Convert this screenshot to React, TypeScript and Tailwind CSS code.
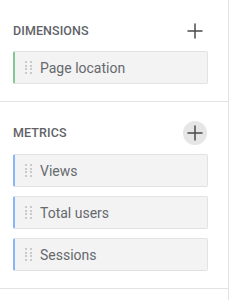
import { Plus } from 'lucide-react';

interface FieldChip {
  label: string;
}

const DIMENSIONS: FieldChip[] = [{ label: 'Page location' }];
const METRICS: FieldChip[] = [{ label: 'Views' }, { label: 'Total users' }, { label: 'Sessions' }];

/** 拖拽点 */
function DragHandle() {
  return (
    <div className="grid grid-cols-2 gap-x-[3px] gap-y-[1.5px] w-[7px]">
      {Array.from({ length: 8 }).map((_, i) => (
        <span key={i} className="block w-[2px] h-[2px] rounded-full bg-[#bdbdbd]" />
      ))}
    </div>
  );
}

function Chip({ label, accent }: { label: string; accent: string }) {
  return (
    <div
      className={`flex items-center h-[33px] bg-[#f3f3f3] border border-[#e2e2e2] border-l-2 ${accent} rounded-[2px]`}
    >
      <div className="pl-[10px] pr-[8px]">
        <DragHandle />
      </div>
      <span className="text-[14px] text-[#66696d] leading-none">{label}</span>
    </div>
  );
}

function SectionHeader({ title, circled }: { title: string; circled?: boolean }) {
  return (
    <div className="flex items-center justify-between h-[24px] pl-[13px] pr-[21px]">
      <span className="text-[12.5px] font-medium text-[#5f6368] tracking-[0.1px]">{title}</span>
      <div
        className={`w-[24px] h-[24px] flex items-center justify-center rounded-full ${circled ? 'bg-[#e6e6e6]' : ''}`}
      >
        <Plus size={24} strokeWidth={1.5} className="text-[#4a4a4a]" />
      </div>
    </div>
  );
}

export default function App() {
  return (
    <div
      className="relative w-[233px] h-[300px] bg-white overflow-hidden"
      style={{ fontFamily: 'Roboto, "Liberation Sans", sans-serif' }}
    >
      <div className="w-[229px] h-full border-r border-[#e3e3e3]">
        {/* Dimensions */}
        <div className="pt-[19px] pb-[17px] border-b border-[#e3e3e3]">
          <SectionHeader title="DIMENSIONS" />
          <div className="mt-[8px] px-[13px] pr-[20px] flex flex-col gap-[9px]">
            {DIMENSIONS.map((d) => (
              <Chip key={d.label} label={d.label} accent="border-l-[#81c995]" />
            ))}
          </div>
        </div>

        {/* Metrics */}
        <div className="pt-[19px] pb-[17px] border-b border-[#e3e3e3]">
          <SectionHeader title="METRICS" circled />
          <div className="mt-[9px] px-[13px] pr-[20px] flex flex-col gap-[9px]">
            {METRICS.map((m) => (
              <Chip key={m.label} label={m.label} accent="border-l-[#8ab4f8]" />
            ))}
          </div>
        </div>
      </div>
    </div>
  );
}
